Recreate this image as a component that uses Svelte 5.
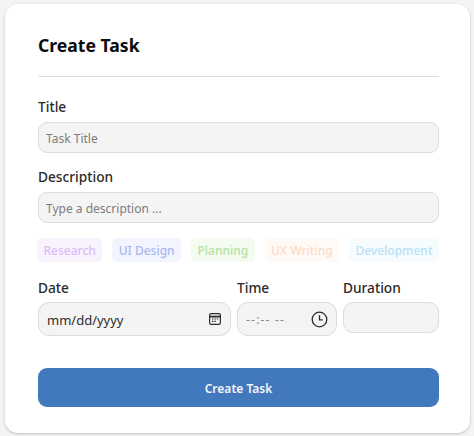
<script lang="ts">
  const tags = [
    { label: 'Research', bg: '#f9f3fe', fg: '#dcbcf8' },
    { label: 'UI Design', bg: '#f2f4fe', fg: '#aab6f3' },
    { label: 'Planning', bg: '#f4fbf0', fg: '#b4e2a0' },
    { label: 'UX Writing', bg: '#fffaf6', fg: '#fbdcc6' },
    { label: 'Development', bg: '#f6fbfe', fg: '#b8e1f7' },
  ];
</script>

<div class="page">
  <form class="card" onsubmit={(e) => e.preventDefault()}>
    <h1>Create Task</h1>
    <hr />

    <label class="label" for="title">Title</label>
    <input id="title" class="input" placeholder="Task Title" />

    <label class="label desc" for="description">Description</label>
    <input id="description" class="input" placeholder="Type a description ..." />

    <div class="tags">
      {#each tags as tag}
        <span class="tag" style="background: {tag.bg}; color: {tag.fg};">{tag.label}</span>
      {/each}
    </div>

    <div class="when">
      <div class="col">
        <span class="label">Date</span>
        <div class="input picker">
          <span class="date-text">mm/dd/yyyy</span>
          <svg width="14" height="14" viewBox="0 0 14 14" fill="none" stroke="#2b2b2b">
            <rect x="1.6" y="1.6" width="10.8" height="10.8" rx="1.6" stroke-width="1.2" />
            <path d="M1.6 4.6h10.8" stroke-width="1.8" />
            <path d="M4 7h1.4M6.4 7h1.4M8.8 7h1.4M4 9.4h1.4M6.4 9.4h1.4" stroke-width="1.2" />
          </svg>
        </div>
      </div>
      <div class="col">
        <span class="label">Time</span>
        <div class="input picker">
          <span class="time-text">--:-- --</span>
          <svg width="17" height="17" viewBox="0 0 17 17" fill="none" stroke="#2b2b2b" stroke-width="1.3">
            <circle cx="8.5" cy="8.5" r="7.3" />
            <path d="M8.5 4.2v4.7h3.2" />
          </svg>
        </div>
      </div>
      <div class="col">
        <label class="label" for="duration">Duration</label>
        <input id="duration" class="input short" />
      </div>
    </div>

    <button class="submit" type="submit">Create Task</button>
  </form>
</div>

<style>
  :global(body) {
    margin: 0;
    background: #f4f4f4;
  }

  .page {
    box-sizing: border-box;
    width: 474px;
    height: 436px;
    padding: 4px 4px 3px 5px;
    font-family: "Noto Sans", "Open Sans", sans-serif;
    overflow: hidden;
  }

  .card {
    box-sizing: border-box;
    height: 100%;
    background: #fff;
    border-radius: 13px;
    padding: 28px 31px 0 33px;
    display: flex;
    flex-direction: column;
    box-shadow: 0 1px 3px rgba(0, 0, 0, 0.22);
  }

  h1 {
    margin: 0;
    font-size: 17.6px;
    line-height: 26px;
    font-weight: 700;
    color: #0c0c0c;
  }

  hr {
    width: 100%;
    margin: 18px 0 19px;
    border: none;
    border-top: 1px solid #dedede;
  }

  .label {
    display: block;
    font-size: 13.7px;
    line-height: 20px;
    font-weight: 500;
    color: #2a2a2a;
    padding-top: 1px;
    margin-bottom: 5px;
  }

  .label.desc {
    margin-top: 13px;
  }

  .input {
    box-sizing: border-box;
    width: 100%;
    height: 31px;
    border: 1px solid #dcdcdc;
    border-radius: 9px;
    background: #f4f4f4;
    padding: 2px 7px 0;
    font-family: inherit;
    font-size: 12px;
    outline: none;
  }

  .input::placeholder {
    color: #7d7d7d;
    opacity: 1;
  }

  .tags {
    display: flex;
    justify-content: space-between;
    margin-top: 15px;
    margin-left: -1px;
  }

  .tag {
    height: 24px;
    line-height: 26px;
    padding: 0 6.5px;
    border-radius: 5px;
    font-size: 12px;
    font-weight: 500;
  }

  .when {
    display: grid;
    grid-template-columns: 193px 100px 96px;
    gap: 6px;
    margin-top: 14px;
  }

  .when .label {
    padding-top: 2px;
    margin-bottom: 4px;
  }

  .picker {
    height: 34px;
    padding: 0 8px;
    border-radius: 11px;
    display: flex;
    align-items: center;
    justify-content: space-between;
  }

  .date-text {
    font-size: 13px;
    color: #2e2e2e;
    padding-top: 1px;
  }

  .time-text {
    font-size: 12px;
    letter-spacing: 1.2px;
    color: #8a8a8a;
  }

  .short {
    border-radius: 10px;
  }

  .submit {
    height: 39px;
    margin-top: 32px;
    padding-top: 2px;
    border: none;
    border-radius: 9px;
    background: #4279bd;
    color: #f2f6fb;
    font-family: inherit;
    font-size: 12px;
    font-weight: 600;
  }
</style>
